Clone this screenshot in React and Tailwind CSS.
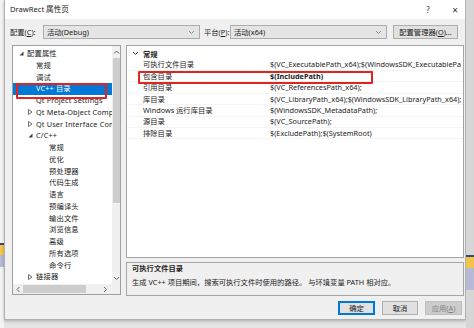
import React from "react";

const treeRows = [
  { t: "配置属性", l: 0, e: "open" },
  { t: "常规", l: 1 },
  { t: "调试", l: 1 },
  { t: "VC++ 目录", l: 1, sel: true },
  { t: "Qt Project Settings", l: 1 },
  { t: "Qt Meta-Object Compiler", l: 1, e: "closed" },
  { t: "Qt User Interface Compiler", l: 1, e: "closed" },
  { t: "C/C++", l: 1, e: "open" },
  { t: "常规", l: 2 },
  { t: "优化", l: 2 },
  { t: "预处理器", l: 2 },
  { t: "代码生成", l: 2 },
  { t: "语言", l: 2 },
  { t: "预编译头", l: 2 },
  { t: "输出文件", l: 2 },
  { t: "浏览信息", l: 2 },
  { t: "高级", l: 2 },
  { t: "所有选项", l: 2 },
  { t: "命令行", l: 2 },
  { t: "链接器", l: 1, e: "closed" },
];

const gridRows = [
  { n: "可执行文件目录", v: "$(VC_ExecutablePath_x64);$(WindowsSDK_ExecutablePath);$(VS_ExecutablePath);$(MSBuild_ExecutablePath)" },
  { n: "包含目录", v: "$(IncludePath)", b: true },
  { n: "引用目录", v: "$(VC_ReferencesPath_x64);" },
  { n: "库目录", v: "$(VC_LibraryPath_x64);$(WindowsSDK_LibraryPath_x64);$(NETFXKitsDir)Lib\\um\\x64" },
  { n: "Windows 运行库目录", v: "$(WindowsSDK_MetadataPath);" },
  { n: "源目录", v: "$(VC_SourcePath);" },
  { n: "排除目录", v: "$(ExcludePath);$(SystemRoot)" },
];

function Chev({ dir = "down", className = "" }) {
  const pts = {
    down: "1,2 3.5,4.5 6,2",
    up: "1,4.5 3.5,2 6,4.5",
    left: "4.5,1 2,3.5 4.5,6",
    right: "2,1 4.5,3.5 2,6",
  }[dir];
  return (
    <svg width="7" height="7" viewBox="0 0 7 7" className={className}>
      <polyline points={pts} fill="none" stroke="currentColor" strokeWidth="1" />
    </svg>
  );
}

function Tri({ open }) {
  return open ? (
    <svg width="5" height="5" viewBox="0 0 5 5">
      <polygon points="4.5,0.5 4.5,4.5 0.5,4.5" fill="#404040" />
    </svg>
  ) : (
    <svg width="5" height="6" viewBox="0 0 5 6">
      <polygon points="0.5,0.5 4,3 0.5,5.5" fill="none" stroke="#606060" strokeWidth="0.9" />
    </svg>
  );
}

export default function App() {
  return (
    <div className="w-[474px] h-[328px] bg-[#e4e4e4] flex overflow-hidden font-['Noto_Sans','Noto_Sans_CJK_SC',sans-serif] text-[7.3px] text-[#1b1b1b]">
      {/* left desktop strip */}
      <div className="w-[4px] h-full flex flex-col bg-[#f4f4f4]">
        <div className="h-[243px]" />
        <div className="h-[2px] bg-[#3a4a78]" />
        <div className="h-[10px] bg-[#f2c54a]" />
        <div className="h-[12px] bg-[#b7bad6]" />
      </div>

      {/* dialog */}
      <div className="w-[462px] h-[320px] flex flex-col bg-[#f0f0f0] border-x border-b border-[#b0b0b0] shadow-[0_1px_3px_rgba(0,0,0,0.25)]">
        {/* title bar */}
        <div className="h-[19px] bg-white flex items-center pl-[5px] pr-[3px] shrink-0">
          <span className="text-[7.6px] text-[#222]">DrawRect 属性页</span>
          <div className="ml-auto flex items-center gap-[13px] text-[#333]">
            <span className="w-[14px] text-center text-[8px]">?</span>
            <span className="w-[14px] text-center text-[10px] leading-none">×</span>
          </div>
        </div>

        {/* config row */}
        <div className="h-[14px] mt-[6px] flex items-center pl-[5px] shrink-0">
          <span className="w-[33px] whitespace-nowrap">配置(<u>C</u>):</span>
          <div className="w-[157px] h-[14px] bg-[#e5e5e5] border border-[#acacac] flex items-center pl-[3px] pr-[4px]">
            <span>活动(Debug)</span>
            <Chev className="ml-auto text-[#8a8a8a]" />
          </div>
          <span className="w-[30px] pl-[4px] whitespace-nowrap">平台(<u>P</u>):</span>
          <div className="w-[157px] h-[14px] bg-[#e5e5e5] border border-[#acacac] flex items-center pl-[3px] pr-[4px]">
            <span>活动(x64)</span>
            <Chev className="ml-auto text-[#8a8a8a]" />
          </div>
          <div className="ml-[6px] w-[65px] h-[14px] bg-[#e1e1e1] border border-[#adadad] flex items-center justify-center whitespace-nowrap">
            配置管理器(<u>O</u>)...
          </div>
        </div>

        {/* panels */}
        <div className="mt-[6px] flex items-start pl-[7px] shrink-0">
          {/* tree */}
          <div className="relative w-[109px] h-[250px] bg-white border border-[#9a9ea6] flex flex-col">
            <div className="flex flex-1 min-h-0">
              <div className="w-[99px] overflow-hidden pt-[1.6px]">
                {treeRows.map((r, i) => (
                  <div
                    key={i}
                    className={
                      "h-[11.75px] flex items-center whitespace-nowrap " +
                      (r.sel ? "bg-[#0078d7] text-white" : "")
                    }
                  >
                    <div
                      className={
                        "w-[8px] flex items-center shrink-0 " +
                        (r.l === 0 ? "ml-[6px]" : r.l === 1 ? "ml-[15px]" : "ml-[28px]")
                      }
                    >
                      {r.e && <Tri open={r.e === "open"} />}
                    </div>
                    <span className="tracking-[0.15px]">{r.t}</span>
                  </div>
                ))}
              </div>
              {/* vertical scrollbar */}
              <div className="w-[8px] bg-[#f0f0f0] flex flex-col items-center">
                <div className="h-[12px] flex items-center text-[#606060]">
                  <Chev dir="up" />
                </div>
                <div className="w-[7px] h-[145px] bg-[#cdcdcd]" />
                <div className="flex-1" />
                <div className="h-[11px] flex items-center text-[#606060]">
                  <Chev dir="down" />
                </div>
              </div>
            </div>
            {/* horizontal scrollbar */}
            <div className="h-[10px] flex bg-[#f0f0f0] shrink-0">
              <div className="w-[99px] flex items-center">
                <div className="w-[10px] flex justify-center text-[#606060]">
                  <Chev dir="left" />
                </div>
                <div className="w-[63px] h-[8px] bg-[#cdcdcd]" />
                <div className="flex-1 flex justify-end pr-[3px] text-[#606060]">
                  <Chev dir="right" />
                </div>
              </div>
              <div className="w-[8px] bg-[#f0f0f0]" />
            </div>
            {/* annotation */}
            <div className="absolute left-[3px] top-[37px] w-[91px] h-[16px] border-2 border-[#e3241e] rounded-[1px]" />
          </div>

          {/* right column */}
          <div className="ml-[5px] w-[338px] flex flex-col">
            <div className="relative h-[213px] bg-white border border-[#a5a5a5] pt-[2.3px] overflow-hidden">
              <div className="h-[11.4px] flex items-center">
                <div className="w-[16px] flex justify-center pl-[1px] text-[#333]">
                  <Chev dir="down" />
                </div>
                <span className="font-bold">常规</span>
              </div>
              {gridRows.map((r, i) => (
                <div key={i} className="h-[11.4px] flex items-center border-b border-[#f4f4f4] pl-[16px] pr-[2px]">
                  <span className="w-[127px] shrink-0 whitespace-nowrap">{r.n}</span>
                  <span className={"flex-1 whitespace-nowrap overflow-hidden " + (r.b ? "font-bold" : "")}>
                    {r.v}
                  </span>
                </div>
              ))}
              <div className="absolute left-[11px] top-[25px] w-[235px] h-[13px] border-2 border-[#e3241e] rounded-[1px]" />
            </div>
            <div className="mt-[4px] h-[34px] bg-[#f0f0f0] border border-[#a5a5a5] pl-[5px] pt-[0.5px] flex flex-col">
              <div className="h-[10px] flex items-center font-bold">可执行文件目录</div>
              <div className="h-[10px] mt-[4px] flex items-center whitespace-nowrap">
                生成 VC++ 项目期间，搜索可执行文件时使用的路径。 与环境变量 PATH 相对应。
              </div>
            </div>
          </div>
        </div>

        {/* buttons */}
        <div className="mt-[5px] flex justify-end gap-[7px] pr-[3px] shrink-0">
          <div className="w-[37px] h-[14px] bg-[#e1e1e1] border-2 border-[#0078d7] flex items-center justify-center">确定</div>
          <div className="w-[36px] h-[14px] bg-[#e1e1e1] border border-[#adadad] flex items-center justify-center">取消</div>
          <div className="w-[37px] h-[14px] bg-[#cccccc] border border-[#bfbfbf] flex items-center justify-center text-[#838383]">
            应用(<u>A</u>)
          </div>
        </div>
      </div>

      {/* right desktop strip */}
      <div className="w-[8px] h-full flex flex-col bg-[#d6d6d6]">
        <div className="h-[255px]" />
        <div className="h-[2px] bg-[#3a4a78]" />
        <div className="h-[11px] bg-[#f2c54a]" />
        <div className="h-[22px] bg-[#b7bad6]" />
      </div>
    </div>
  );
}
